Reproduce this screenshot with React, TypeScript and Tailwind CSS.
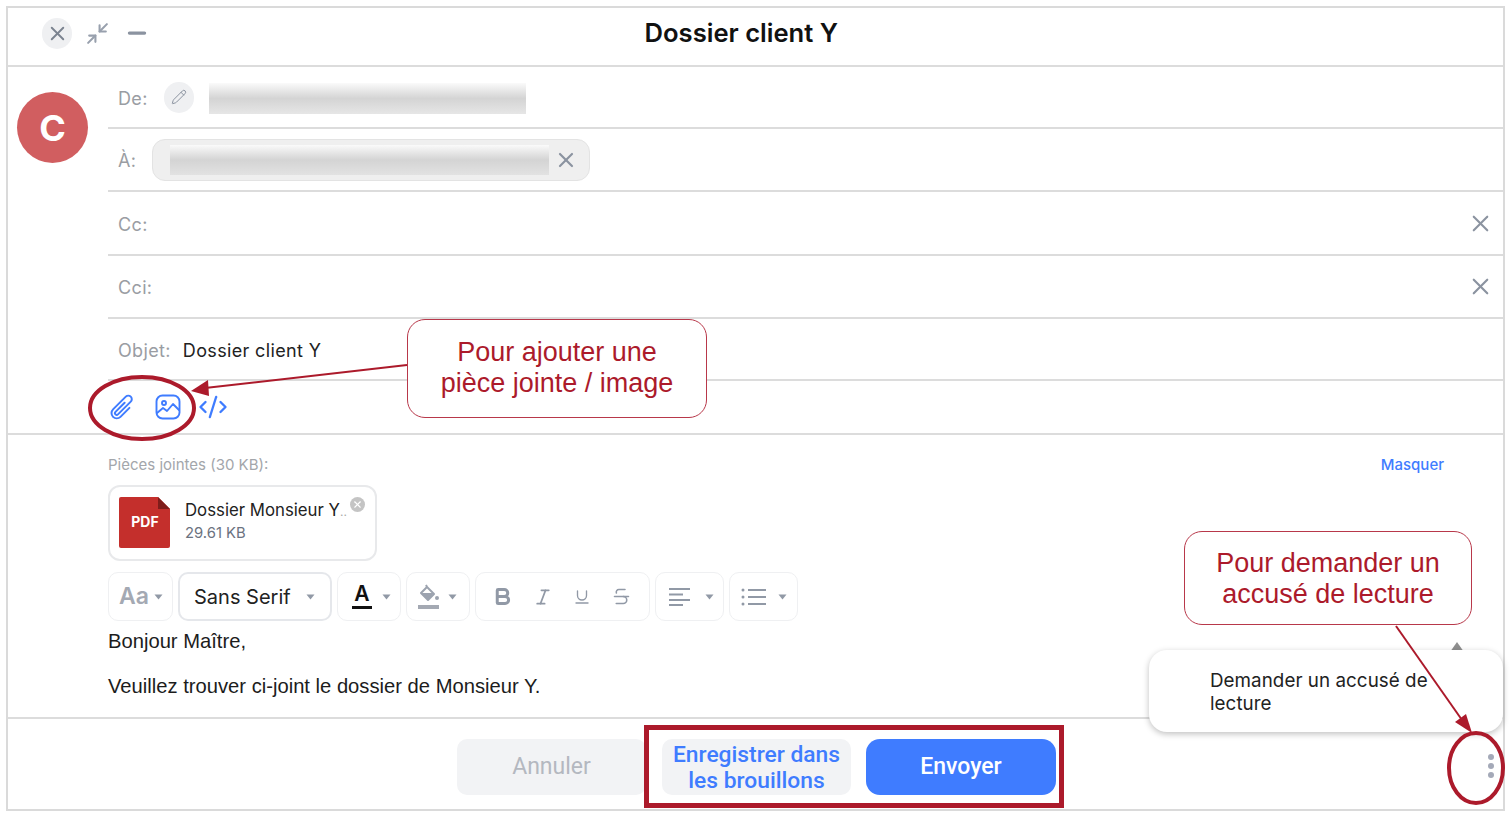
import React from "react";
import { X, Minimize2, Minus, Pencil, CodeXml, Bold, Italic, Underline, Strikethrough } from "lucide-react";

const Caret = ({ className = "" }: { className?: string }) => (
  <svg width="9" height="6" viewBox="0 0 9 6" className={className}>
    <path d="M0.5 0.5h8L4.5 5.5z" fill="#9199a6" />
  </svg>
);

const Row = ({ label, children, h, close }: { label: string; children?: React.ReactNode; h: string; close?: boolean }) => (
  <div className={`flex items-center border-b-2 border-[#dcdcdc] pl-[10px] pr-[9px] ${h}`}>
    <span className="text-[18px] tracking-[0.35px] text-[#9a9da3] mr-[16px] relative top-[1px]">{label}</span>
    {children}
    {close && <X className="ml-auto text-[#8b93a0]" size={27} strokeWidth={1.9} />}
  </div>
);

const ToolGroup = ({ children, w, strong }: { children: React.ReactNode; w: string; strong?: boolean }) => (
  <div className={`flex items-center h-[49px] rounded-[10px] ${w} ${strong ? "border-2 border-[#e5e7eb]" : "border border-[#eff0f2]"}`}>
    {children}
  </div>
);

export default function App() {
  return (
    <div className="relative w-[1511px] h-[815px] bg-white pt-[6px] pl-[6px] font-['Inter',sans-serif] overflow-hidden">
      <div className="w-[1499px] h-[805px] border-2 border-[#dadada] flex flex-col">
        {/* title bar */}
        <div className="h-[59px] shrink-0 border-b-2 border-[#dcdcdc] flex items-center pl-[34px] pb-[7px]">
          <div className="w-[30px] h-[31px] rounded-full bg-[#eff0f2] flex items-center justify-center">
            <X size={23} strokeWidth={2} className="text-[#7b8390]" />
          </div>
          <Minimize2 size={25} strokeWidth={2} className="text-[#98a0ad] ml-[13px]" />
          <Minus size={26} strokeWidth={3} className="text-[#8b93a0] ml-[14px]" />
          <span className="ml-auto mr-[665px] text-[25.6px] font-semibold text-[#111] leading-none">Dossier client Y</span>
        </div>

        {/* header */}
        <div className="flex shrink-0 border-b-2 border-[#dcdcdc] h-[368px]">
          <div className="w-[100px] shrink-0 pl-[9px] pt-[25px]">
            <div className="w-[71px] h-[71px] rounded-full bg-[#d15e60] flex items-center justify-center text-white text-[36px] font-bold">C</div>
          </div>
          <div className="flex-1">
            <Row label="De:" h="h-[62px]">
              <div className="w-[30px] h-[31px] rounded-full bg-[#eff0f2] flex items-center justify-center">
                <Pencil size={16} strokeWidth={1.5} className="text-[#8b93a0]" />
              </div>
              <div className="ml-[15px] w-[317px] h-[31px] bg-gradient-to-b from-[#fafafa] via-[#d4d4d4] to-[#e6e6e6] mt-[2px]" />
            </Row>
            <Row label="À:" h="h-[63px]">
              <div className="flex items-center w-[438px] h-[42px] rounded-[13px] bg-[#efefef] border border-[#e3e3e3] pl-[17px]">
                <div className="w-[379px] h-[30px] bg-gradient-to-b from-[#fafafa] via-[#d4d4d4] to-[#e2e2e2]" />
                <X size={24} strokeWidth={2.2} className="text-[#8b93a0] ml-[5px]" />
              </div>
            </Row>
            <Row label="Cc:" h="h-[64px]" close />
            <Row label="Cci:" h="h-[63px]" close />
            <Row label="Objet:" h="h-[62px]">
              <span className="text-[18px] tracking-[0.35px] text-[#222] -ml-[4px] relative top-[1px]">Dossier client Y</span>
            </Row>
            <div className="flex items-center h-[52px] text-[#3f7cff]">
              <svg width="28" height="28" viewBox="0 0 24 24" fill="none" stroke="currentColor" strokeWidth="1.7" strokeLinecap="round" strokeLinejoin="round">
                <path d="m18.375 12.739-7.693 7.693a4.5 4.5 0 0 1-6.364-6.364l10.94-10.94A3 3 0 1 1 19.5 7.372L8.552 18.32m.009-.01-.01.01m5.699-9.941-7.81 7.81a1.5 1.5 0 0 0 2.112 2.13" />
              </svg>
              <svg width="26" height="26" viewBox="0 0 26 26" fill="none" stroke="currentColor" strokeWidth="1.9" className="ml-[19px]">
                <rect x="1.5" y="1.5" width="23" height="23" rx="6" />
                <circle cx="9" cy="9" r="2" />
                <path d="M2 19l6-5 4 3 6-7 6 6" strokeLinejoin="round" strokeLinecap="round" />
              </svg>
              <CodeXml size={30} strokeWidth={1.9} className="ml-[17px]" />
            </div>
          </div>
        </div>

        {/* body */}
        <div className="flex-1 min-h-0 border-b-2 border-[#dcdcdc] pl-[100px] pr-[59px] relative">
          <div className="flex justify-between pt-[20px] text-[15px] leading-[20px]">
            <span className="text-[#a3a6ab]">Pièces jointes (30 KB):</span>
            <span className="text-[#3f7cff] font-medium">Masquer</span>
          </div>
          <div className="relative mt-[10px] w-[269px] h-[76px] rounded-[12px] border-2 border-[#e8e9eb] flex items-center pl-[9px] pb-[1px]">
            <svg width="51" height="51" viewBox="0 0 51 51">
              <path d="M2 0H39L51 12V49a2 2 0 0 1-2 2H2a2 2 0 0 1-2-2V2a2 2 0 0 1 2-2z" fill="#c42f2c" />
              <path d="M39 0L51 12H39z" fill="#7f1d1b" />
              <text x="26" y="30" textAnchor="middle" fontSize="14" fontWeight="700" fill="#fff" fontFamily="Inter, sans-serif">PDF</text>
            </svg>
            <div className="ml-[15px] flex flex-col pb-[3px]">
              <span className="text-[16.8px] leading-[22px] text-[#222] whitespace-nowrap">Dossier Monsieur Y<span className="text-[#aaa] text-[12px]">..</span></span>
              <span className="text-[14.8px] leading-[20px] text-[#6b7280]">29.61 KB</span>
            </div>
            <span className="absolute right-[10px] top-[10px] w-[15px] h-[15px] rounded-full bg-[#c4c4c4] flex items-center justify-center">
              <X size={11} strokeWidth={2.4} className="text-white" />
            </span>
          </div>

          {/* toolbar */}
          <div className="flex gap-[5px] mt-[11px] text-[#9199a6]">
            <ToolGroup w="w-[65px] pl-[10px]">
              <span className="text-[23px] font-semibold text-[#a4a9b3]">Aa</span>
              <Caret className="ml-[5px]" />
            </ToolGroup>
            <ToolGroup w="w-[154px] pl-[14px]" strong>
              <span className="text-[20px] text-[#222]">Sans Serif</span>
              <Caret className="ml-[15px]" />
            </ToolGroup>
            <ToolGroup w="w-[64px] pl-[13px]">
              <span className="flex flex-col items-center w-[22px] text-[#111]">
                <span className="text-[21px] font-semibold leading-[20px]">A</span>
                <span className="w-[20px] h-[3px] bg-[#111] mt-[2px]" />
              </span>
              <Caret className="ml-[9px]" />
            </ToolGroup>
            <ToolGroup w="w-[64px] pl-[11px]">
              <svg width="22" height="26" viewBox="0 0 22 26" fill="none">
                <path d="M8 1l1 2 7 7-6 6-7-7 6-6" stroke="#9ca3af" strokeWidth="2" strokeLinejoin="round" />
                <path d="M3 9h13l-6 7z" fill="#9ca3af" />
                <circle cx="19" cy="14" r="2" fill="#9ca3af" />
                <rect x="0" y="21" width="21" height="4" fill="#a4a9b3" />
              </svg>
              <Caret className="ml-[8px]" />
            </ToolGroup>
            <ToolGroup w="w-[175px] pl-[16px] gap-[20px]">
              <Bold size={21} strokeWidth={3.4} />
              <Italic size={20} strokeWidth={2} />
              <Underline size={18} strokeWidth={1.8} />
              <Strikethrough size={21} strokeWidth={1.8} />
            </ToolGroup>
            <ToolGroup w="w-[69px] pl-[13px]">
              <svg width="22" height="20" viewBox="0 0 22 20" stroke="currentColor" strokeWidth="2">
                <path d="M0 2h21M0 7.5h14M0 13h21M0 18h14" />
              </svg>
              <Caret className="ml-[14px]" />
            </ToolGroup>
            <ToolGroup w="w-[69px] pl-[11px]">
              <svg width="25" height="18" viewBox="0 0 25 18" fill="none" stroke="currentColor" strokeWidth="2">
                <path d="M7 2h18M7 9h18M7 16h18" />
                <circle cx="2" cy="2" r="1.5" fill="currentColor" stroke="none" />
                <circle cx="2" cy="9" r="1.5" fill="currentColor" stroke="none" />
                <circle cx="2" cy="16" r="1.5" fill="currentColor" stroke="none" />
              </svg>
              <Caret className="ml-[12px]" />
            </ToolGroup>
          </div>

          {/* message */}
          <div className="font-['Liberation_Sans',sans-serif] text-[20.2px] text-[#1c1c1c] leading-[24px] mt-[8px]">
            <p>Bonjour Maître,</p>
            <p className="mt-[21px]">Veuillez trouver ci-joint le dossier de Monsieur Y.</p>
          </div>
        </div>

        {/* footer */}
        <div className="relative h-[90px] shrink-0 flex items-center pl-[449px] pt-[5px] font-['Roboto',sans-serif]">
          <button className="w-[189px] h-[56px] pt-[2px] rounded-[10px] bg-[#f2f3f5] text-[#b4b8c0] text-[23px]">Annuler</button>
          <button className="ml-[16px] w-[189px] h-[56px] pt-[2px] rounded-[10px] bg-[#f2f3f5] text-[#3f7cff] text-[22.8px] font-medium leading-[26px]">Enregistrer dans<br />les brouillons</button>
          <button className="ml-[15px] w-[190px] h-[56px] pt-[2px] rounded-[14px] bg-[#3f7cff] text-white text-[23px] font-medium">Envoyer</button>
          <span className="absolute left-[1480px] top-[35px] flex flex-col gap-[3px]">
            <span className="w-[6px] h-[6px] rounded-full bg-[#a4a9b8]" />
            <span className="w-[6px] h-[6px] rounded-full bg-[#a4a9b8]" />
            <span className="w-[6px] h-[6px] rounded-full bg-[#a4a9b8]" />
          </span>
        </div>
      </div>

      {/* popover */}
      <div className="absolute left-[1450px] top-[642px] w-[14px] h-[10px]">
        <svg width="14" height="10" viewBox="0 0 14 10"><path d="M7 0l7 10H0z" fill="#8f8f8f" /></svg>
      </div>
      <div className="absolute left-[1149px] top-[650px] w-[354px] h-[82px] rounded-[18px] bg-white shadow-[0_2px_6px_rgba(0,0,0,0.25)] pl-[61px] pt-[19px] pr-[60px] text-[18.8px] leading-[23px] text-[#222] tracking-[0.05px]">
        Demander un accusé de lecture
      </div>

      {/* callouts */}
      <div className="absolute left-[407px] top-[319px] w-[300px] h-[99px] rounded-[18px] bg-white border border-[#b8384a] flex items-center justify-center text-center font-['Liberation_Sans',sans-serif] text-[27px] leading-[31px] text-[#ac1a2b] pb-[2px]">
        <span>Pour ajouter une<br />pièce jointe / image</span>
      </div>
      <div className="absolute left-[1184px] top-[531px] w-[288px] h-[94px] rounded-[18px] bg-white border border-[#b8384a] flex items-center justify-center text-center font-['Liberation_Sans',sans-serif] text-[27px] leading-[31px] text-[#ac1a2b] pt-[2px]">
        <span>Pour demander un<br />accusé de lecture</span>
      </div>
      <div className="absolute left-[644px] top-[725px] w-[420px] h-[83px] border-[5px] border-[#ac1a2b]" />

      <svg className="absolute inset-0 pointer-events-none" width="1511" height="815" fill="none">
        <ellipse cx="142" cy="408" rx="52" ry="31" stroke="#ac1a2b" strokeWidth="4" />
        <ellipse cx="1476" cy="768" rx="27" ry="35" stroke="#ac1a2b" strokeWidth="4" />
        <path d="M407 365L205 388" stroke="#ac1a2b" strokeWidth="2" />
        <path d="M191 391L208 380L209 396Z" fill="#ac1a2b" />
        <path d="M1396 626L1462 720" stroke="#ac1a2b" strokeWidth="2" />
        <path d="M1472 733L1455 722L1466 714Z" fill="#ac1a2b" />
      </svg>
    </div>
  );
}
